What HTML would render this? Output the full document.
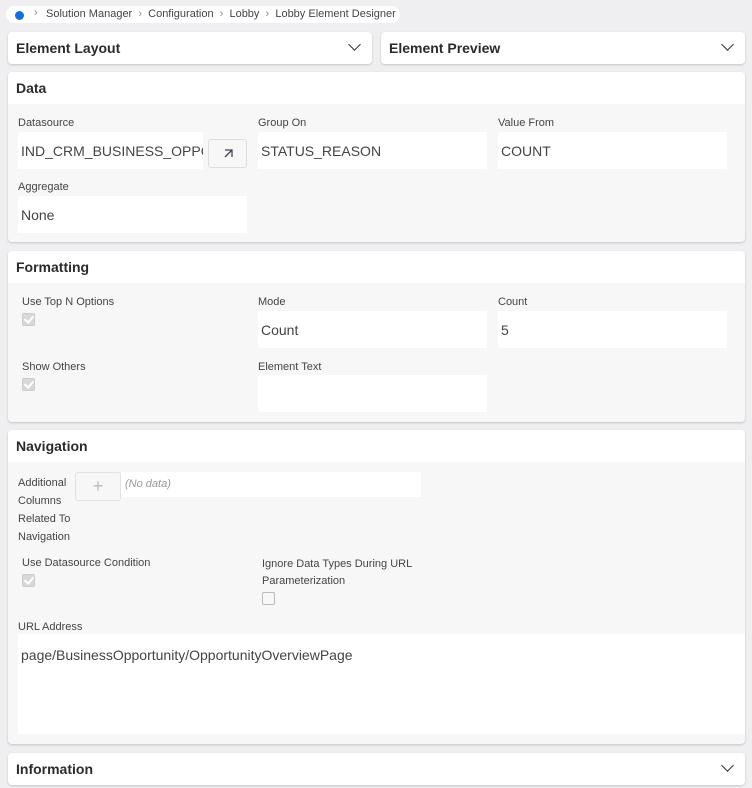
<!DOCTYPE html>
<html><head><style>
*{box-sizing:border-box;margin:0;padding:0}
body{width:752px;height:788px;background:#efeef0;font-family:"Liberation Sans",sans-serif;color:#333;position:relative;overflow:hidden}
.a{position:absolute}
.card{position:absolute;left:8px;width:737px;background:#f7f7f7;border-radius:4px;box-shadow:0 1px 2px rgba(0,0,0,.18);overflow:hidden}
.hd{position:absolute;left:0;top:0;right:0;height:32px;background:#fff;font-size:14px;font-weight:bold;color:#2b2b2b;padding:8px 0 0 8px}
.lb{position:absolute;font-size:11px;color:#444}
.in{position:absolute;background:#fff;font-size:14px;color:#444;padding:11px 0 0 3px;white-space:nowrap;overflow:hidden}
.cb{position:absolute;width:13px;height:13px;border-radius:2px;background:#d8d8d8;border:1px solid #ccc}
.cb:after{content:"";position:absolute;left:3px;top:0px;width:4px;height:7px;border:solid #fff;border-width:0 2px 2px 0;transform:rotate(40deg)}
.chev{position:absolute;width:9px;height:9px;border:solid #333;border-width:0 1.5px 1.5px 0;transform:rotate(45deg)}
</style></head><body>
<div class="a" style="left:6px;top:6px;width:394px;height:17px;background:#fff;border-radius:9px;font-size:11px;color:#444;padding:2px 0 0 40px;white-space:nowrap">
<span class="a" style="left:9px;top:5px;width:9px;height:9px;border-radius:50%;background:#1a6fd6"></span>
<span class="a" style="left:28px;top:1px;color:#888">›</span>Solution Manager &nbsp;<span style="color:#888">›</span>&nbsp; Configuration &nbsp;<span style="color:#888">›</span>&nbsp; Lobby &nbsp;<span style="color:#888">›</span>&nbsp; Lobby Element Designer</div>

<div class="a" style="left:8px;top:32px;width:364px;height:32px;background:#fff;border-radius:4px;box-shadow:0 1px 2px rgba(0,0,0,.18);font-size:14px;font-weight:bold;padding:8px 0 0 8px;color:#2b2b2b">Element Layout<div class="chev" style="left:342px;top:8px"></div></div>
<div class="a" style="left:381px;top:32px;width:364px;height:32px;background:#fff;border-radius:4px;box-shadow:0 1px 2px rgba(0,0,0,.18);font-size:14px;font-weight:bold;padding:8px 0 0 8px;color:#2b2b2b">Element Preview<div class="chev" style="left:342px;top:8px"></div></div>

<div class="card" style="top:72px;height:170px">
<div class="hd">Data</div>
<div class="lb" style="left:10px;top:45px">Datasource</div>
<div class="in" style="left:10px;top:60px;width:185px;height:37px">IND_CRM_BUSINESS_OPPO</div>
<div class="a" style="left:200px;top:67px;width:39px;height:29px;border:1px solid #ddd;border-radius:3px;background:#f7f7f7">
<svg class="a" style="left:14px;top:8px" width="11" height="11" viewBox="0 0 11 11"><path d="M2 2h7v7M9 2L2 9" stroke="#445" stroke-width="1.3" fill="none"/></svg></div>
<div class="lb" style="left:250px;top:45px">Group On</div>
<div class="in" style="left:250px;top:60px;width:229px;height:37px">STATUS_REASON</div>
<div class="lb" style="left:490px;top:45px">Value From</div>
<div class="in" style="left:490px;top:60px;width:229px;height:37px">COUNT</div>
<div class="lb" style="left:10px;top:109px">Aggregate</div>
<div class="in" style="left:10px;top:124px;width:229px;height:37px">None</div>
</div>

<div class="card" style="top:251px;height:171px">
<div class="hd">Formatting</div>
<div class="lb" style="left:14px;top:45px">Use Top N Options</div>
<div class="cb" style="left:14px;top:62px"></div>
<div class="lb" style="left:250px;top:45px">Mode</div>
<div class="in" style="left:250px;top:60px;width:229px;height:37px">Count</div>
<div class="lb" style="left:490px;top:45px">Count</div>
<div class="in" style="left:490px;top:60px;width:229px;height:37px">5</div>
<div class="lb" style="left:14px;top:110px">Show Others</div>
<div class="cb" style="left:14px;top:127px"></div>
<div class="lb" style="left:250px;top:110px">Element Text</div>
<div class="in" style="left:250px;top:124px;width:229px;height:37px"></div>
</div>

<div class="card" style="top:430px;height:314px">
<div class="hd">Navigation</div>
<div class="lb" style="left:10px;top:44px;line-height:18px">Additional<br>Columns<br>Related To<br>Navigation</div>
<div class="a" style="left:67px;top:42px;width:46px;height:29px;border:1px solid #e2e2e2;border-radius:3px;background:#f7f7f7;color:#bbb;font-size:18px;text-align:center;line-height:26px">+</div>
<div class="a" style="left:113px;top:42px;width:300px;height:25px;background:#fff;font-size:11px;font-style:italic;color:#999;padding:6px 0 0 4px">(No data)</div>
<div class="lb" style="left:14px;top:127px">Use Datasource Condition</div>
<div class="cb" style="left:14px;top:144px"></div>
<div class="lb" style="left:254px;top:126px;line-height:17px">Ignore Data Types During URL<br>Parameterization</div>
<div class="a" style="left:254px;top:162px;width:13px;height:13px;border:1px solid #bbb;border-radius:2px;background:#f7f7f7"></div>
<div class="lb" style="left:10px;top:191px">URL Address</div>
<div class="in" style="left:10px;top:204px;width:727px;height:100px;padding-top:13px">page/BusinessOpportunity/OpportunityOverviewPage</div>
</div>

<div class="card" style="top:753px;height:32px;background:#fff">
<div class="hd">Information</div>
<div class="chev" style="left:715px;top:8px"></div>
</div>
</body></html>
